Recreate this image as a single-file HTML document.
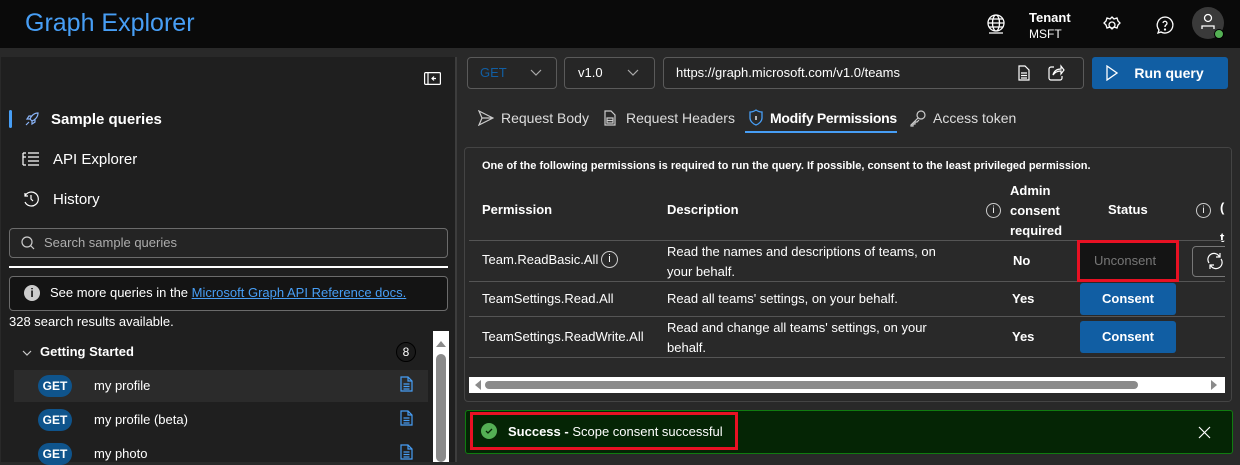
<!DOCTYPE html>
<html><head><meta charset="utf-8"><style>
*{box-sizing:border-box;margin:0;padding:0}
body{width:1240px;height:462px;overflow:hidden;background:#292929;font-family:"Segoe UI","Liberation Sans",sans-serif;color:#fff;position:relative;font-size:14px}
.a{position:absolute}
.hdr{left:0;top:0;width:1240px;height:48px;background:#0a0a0a}
.side{left:1px;top:57px;width:454px;height:405px;background:#1f1f1f}
svg{display:block}
.get{background:#0f548c;border-radius:12px;width:34px;height:22px;font-size:12px;font-weight:bold;text-align:center;line-height:22px}
.btn{background:#115ea3;border-radius:3px;text-align:center;font-weight:bold;font-size:13px}
</style></head><body>
<div class="a hdr"></div>
<div class="a" style="left:25px;top:9px;font-size:25px;color:#479ef5">Graph Explorer</div>
<svg class="a" style="left:985px;top:13px" width="22" height="22" viewBox="0 0 22 22" fill="none" stroke="#fff" stroke-width="1.3"><circle cx="11" cy="10" r="8"/><ellipse cx="11" cy="10" rx="3.5" ry="8"/><path d="M3 10h16M4.5 6h13M4.5 14h13M4 20h14"/></svg>
<div class="a" style="left:1029px;top:10px;font-size:13px;font-weight:bold">Tenant</div>
<div class="a" style="left:1029px;top:27px;font-size:12px">MSFT</div>
<svg class="a" style="left:1102px;top:15px" width="20" height="20" viewBox="0 0 20 20" fill="none" stroke="#fff" stroke-width="1.3"><circle cx="10" cy="10" r="3"/><path d="M10 2l2 2 3-1 1 3 2 2-2 2-1 3-3-1-2 2-2-2-3 1-1-3-2-2 2-2 1-3 3 1z"/></svg>
<svg class="a" style="left:1155px;top:15px" width="20" height="20" viewBox="0 0 20 20" fill="none" stroke="#fff" stroke-width="1.3"><path d="M10 2a8 8 0 1 1-4 15l-3 1 1-3A8 8 0 0 1 10 2z"/><path d="M8 8a2 2 0 1 1 3 2c-1 .5-1 1-1 2"/><circle cx="10" cy="14.5" r=".5" fill="#fff"/></svg>
<div class="a" style="left:1192px;top:7px;width:32px;height:32px;border-radius:16px;background:#3a3a3a"></div>
<svg class="a" style="left:1199px;top:13px" width="18" height="18" viewBox="0 0 18 18" fill="none" stroke="#fff" stroke-width="1.3"><circle cx="9" cy="5" r="3.5"/><path d="M3 16v-3h12v3"/></svg>
<div class="a" style="left:1214px;top:29px;width:10px;height:10px;border-radius:5px;background:#54b054;border:1px solid #000"></div>

<div class="a side"></div>
<div class="a" style="left:455px;top:57px;width:2px;height:405px;background:#3d3d3d"></div>
<svg class="a" style="left:424px;top:72px" width="17" height="13" viewBox="0 0 17 13" fill="none" stroke="#fff" stroke-width="1.2"><rect x=".6" y=".6" width="15.8" height="11.8" rx="1"/><path d="M4 1v11M12 6.5H8m2-2-2 2 2 2"/></svg>
<div class="a" style="left:9px;top:110px;width:3px;height:18px;background:#479ef5;border-radius:2px"></div>
<svg class="a" style="left:24px;top:111px" width="16" height="16" viewBox="0 0 16 16" fill="none" stroke="#8ab4f8" stroke-width="1.2"><path d="M14 2c-4 0-7 3-8 6l2 2c3-1 6-4 6-8zM6 8L3 8l2-3h3M8 10v3l3-2V8M2 14l3-3"/></svg>
<div class="a" style="left:51px;top:111px;font-size:15px;font-weight:bold">Sample queries</div>
<svg class="a" style="left:22px;top:152px" width="18" height="14" viewBox="0 0 18 14" fill="none" stroke="#fff" stroke-width="1.2"><path d="M1 1h3M6 1h11M1 5h3v0M6 5h11M6 9h11M1 13h3M6 13h11M1 1v12"/></svg>
<div class="a" style="left:53px;top:151px;font-size:15px">API Explorer</div>
<svg class="a" style="left:23px;top:191px" width="16" height="16" viewBox="0 0 16 16" fill="none" stroke="#fff" stroke-width="1.2"><path d="M2 5a7 7 0 1 1 0 6M2 2v3h3M8 4v4l2 2"/></svg>
<div class="a" style="left:53px;top:191px;font-size:15px">History</div>
<div class="a" style="left:9px;top:228px;width:439px;height:30px;border:1px solid #6b6b6b;border-radius:4px;background:#242424"></div>
<svg class="a" style="left:21px;top:236px" width="14" height="14" viewBox="0 0 14 14" fill="none" stroke="#ccc" stroke-width="1.2"><circle cx="6" cy="6" r="5"/><path d="M9.5 9.5 13 13"/></svg>
<div class="a" style="left:44px;top:235px;font-size:13px;color:#adadad">Search sample queries</div>
<div class="a" style="left:9px;top:266px;width:439px;height:2px;background:#fff"></div>
<div class="a" style="left:9px;top:276px;width:439px;height:35px;border:1px solid #6b6b6b;border-radius:4px;background:#141414"></div>
<div class="a" style="left:24px;top:285px;width:16px;height:16px;border-radius:8px;background:#ccc;color:#141414;font-size:12px;font-weight:bold;text-align:center;line-height:16px">i</div>
<div class="a" style="left:50px;top:285px;font-size:13px">See more queries in the <span style="color:#479ef5;text-decoration:underline">Microsoft Graph API Reference docs.</span></div>
<div class="a" style="left:9px;top:314px;font-size:13px">328 search results available.</div>
<svg class="a" style="left:22px;top:349px" width="10" height="8" viewBox="0 0 10 8" fill="none" stroke="#ccc" stroke-width="1.2"><path d="M1 2l4 4 4-4"/></svg>
<div class="a" style="left:40px;top:344px;font-size:13px;font-weight:bold">Getting Started</div>
<div class="a" style="left:396px;top:342px;width:20px;height:20px;border-radius:10px;border:1px solid #000;background:#1a1a1a;font-size:12px;text-align:center;line-height:18px">8</div>
<div class="a" style="left:14px;top:370px;width:414px;height:32px;background:#2b2b2b"></div>
<div class="a get" style="left:38px;top:375px">GET</div>
<div class="a" style="left:94px;top:378px;font-size:13px">my profile</div>
<div class="a get" style="left:38px;top:409px">GET</div>
<div class="a" style="left:94px;top:412px;font-size:13px">my profile (beta)</div>
<div class="a get" style="left:38px;top:443px">GET</div>
<div class="a" style="left:94px;top:446px;font-size:13px">my photo</div>
<svg class="a" style="left:400px;top:376px" width="13" height="16" viewBox="0 0 13 16" fill="none" stroke="#479ef5" stroke-width="1.2"><path d="M1 1h7l4 4v10H1zM8 1v4h4M3.5 8h6M3.5 10.5h6M3.5 13h6"/></svg>
<svg class="a" style="left:400px;top:410px" width="13" height="16" viewBox="0 0 13 16" fill="none" stroke="#479ef5" stroke-width="1.2"><path d="M1 1h7l4 4v10H1zM8 1v4h4M3.5 8h6M3.5 10.5h6M3.5 13h6"/></svg>
<svg class="a" style="left:400px;top:444px" width="13" height="16" viewBox="0 0 13 16" fill="none" stroke="#479ef5" stroke-width="1.2"><path d="M1 1h7l4 4v10H1zM8 1v4h4M3.5 8h6M3.5 10.5h6M3.5 13h6"/></svg>
<div class="a" style="left:433px;top:331px;width:16px;height:131px;background:#fff"></div>
<div class="a" style="left:436px;top:354px;width:10px;height:108px;background:#8a8a8a;border-radius:5px"></div>
<svg class="a" style="left:436px;top:340px" width="10" height="7"><path d="M0 7L5 1 10 7z" fill="#8a8a8a"/></svg>

<div class="a" style="left:467px;top:57px;width:90px;height:32px;border:1px solid #5a5a5a;border-radius:4px;background:#262626"></div>
<div class="a" style="left:480px;top:65px;font-size:13px;color:#115ea3">GET</div>
<svg class="a" style="left:530px;top:69px" width="12" height="8" fill="none" stroke="#aaa" stroke-width="1.2"><path d="M1 1l5 5 5-5"/></svg>
<div class="a" style="left:564px;top:57px;width:91px;height:32px;border:1px solid #5a5a5a;border-radius:4px;background:#262626"></div>
<div class="a" style="left:578px;top:65px;font-size:13px">v1.0</div>
<svg class="a" style="left:627px;top:69px" width="12" height="8" fill="none" stroke="#aaa" stroke-width="1.2"><path d="M1 1l5 5 5-5"/></svg>
<div class="a" style="left:663px;top:57px;width:421px;height:32px;border:1px solid #5a5a5a;border-radius:4px;background:#262626"></div>
<div class="a" style="left:676px;top:65px;font-size:13px">https://graph.microsoft.com/v1.0/teams</div>
<svg class="a" style="left:1018px;top:65px" width="12" height="16" fill="none" stroke="#fff" stroke-width="1.2"><path d="M1 1h6l4 4v10H1zM3 8h6M3 10.5h6M3 13h6"/></svg>
<svg class="a" style="left:1048px;top:64px" width="17" height="17" fill="none" stroke="#fff" stroke-width="1.2"><path d="M6 3H3a2 2 0 0 0-2 2v9a2 2 0 0 0 2 2h9a2 2 0 0 0 2-2v-2M5 11c1-4 4-6 8-6V2l3 4-3 4V7c-3 0-6 1-8 4z"/></svg>
<div class="a btn" style="left:1092px;top:57px;width:136px;height:32px;line-height:32px;font-size:14px"><span style="margin-left:18px">Run query</span></div>
<svg class="a" style="left:1106px;top:65px" width="12" height="16" fill="none" stroke="#fff" stroke-width="1.3"><path d="M1 1l10 7-10 7z"/></svg>

<svg class="a" style="left:478px;top:110px" width="16" height="16" fill="none" stroke="#ccc" stroke-width="1.2"><path d="M1 1l14 7-14 7 3-7zM4 8h11"/></svg>
<div class="a" style="left:501px;top:110px;font-size:14px;color:#ddd">Request Body</div>
<svg class="a" style="left:604px;top:110px" width="12" height="16" fill="none" stroke="#ccc" stroke-width="1.2"><path d="M1 1h6l4 4v10H1zM3 8h6v5H3zM3 10.5h6"/></svg>
<div class="a" style="left:626px;top:110px;font-size:14px;color:#ddd">Request Headers</div>
<svg class="a" style="left:749px;top:109px" width="14" height="17" fill="none" stroke="#479ef5" stroke-width="1.3"><path d="M7 1c2 1.5 4 2 6 2v6c0 3-3 6-6 7-3-1-6-4-6-7V3c2 0 4-.5 6-2z"/><path d="M7 7v4" stroke="#fff"/></svg>
<div class="a" style="left:770px;top:110px;font-size:14px;font-weight:bold;letter-spacing:-0.3px">Modify Permissions</div>
<div class="a" style="left:745px;top:131px;width:152px;height:2px;background:#479ef5"></div>
<svg class="a" style="left:910px;top:110px" width="16" height="17" fill="none" stroke="#ccc" stroke-width="1.2"><circle cx="11" cy="5" r="4"/><path d="M8 8l-7 7v1h2v-2h2v-2h2l2-2"/></svg>
<div class="a" style="left:933px;top:110px;font-size:14px;color:#ddd">Access token</div>

<div class="a" style="left:464px;top:147px;width:768px;height:255px;border:1px solid #444;border-radius:4px;background:#292929;overflow:hidden">
<div class="a" style="left:727px;top:98px;width:60px;height:31px;border:1px solid #777;border-radius:4px"></div>
<svg class="a" style="left:741px;top:104px" width="18" height="18" fill="none" stroke="#fff" stroke-width="1.2"><path d="M3 11a6 6 0 0 1 10-7l1 1M15 7a6 6 0 0 1-10 7l-1-1M14 1v4h-4M4 17v-4h4"/></svg>
<div class="a" style="left:755px;top:45px;font-size:13px;font-weight:bold;line-height:30px">(<br>t</div>
<div class="a" style="left:760px;top:0;width:8px;height:255px;background:#292929"></div>
</div>
<div class="a" style="left:482px;top:160px;font-size:11px;font-weight:bold">One of the following permissions is required to run the query. If possible, consent to the least privileged permission.</div>
<div class="a" style="left:482px;top:202px;font-size:13px;font-weight:bold">Permission</div>
<div class="a" style="left:667px;top:202px;font-size:13px;font-weight:bold">Description</div>
<div class="a" style="left:986px;top:203px;width:15px;height:15px;border:1px solid #ccc;border-radius:8px;font-size:10px;text-align:center;line-height:13px">i</div>
<div class="a" style="left:1010px;top:181px;font-size:13px;font-weight:bold;line-height:20px">Admin<br>consent<br>required</div>
<div class="a" style="left:1108px;top:202px;font-size:13px;font-weight:bold">Status</div>
<div class="a" style="left:1196px;top:203px;width:15px;height:15px;border:1px solid #ccc;border-radius:8px;font-size:10px;text-align:center;line-height:13px">i</div>
<div class="a" style="left:469px;top:240px;width:756px;height:1px;background:#555"></div>
<div class="a" style="left:469px;top:281px;width:756px;height:1px;background:#555"></div>
<div class="a" style="left:469px;top:316px;width:756px;height:1px;background:#555"></div>
<div class="a" style="left:469px;top:357px;width:756px;height:1px;background:#555"></div>
<div class="a" style="left:482px;top:252px;font-size:13px">Team.ReadBasic.All</div>
<div class="a" style="left:601px;top:251px;width:17px;height:17px;border:1px solid #ccc;border-radius:9px;font-size:11px;text-align:center;line-height:15px">i</div>
<div class="a" style="left:667px;top:242px;font-size:13px;line-height:20px">Read the names and descriptions of teams, on<br>your behalf.</div>
<div class="a" style="left:1013px;top:253px;font-size:13px;font-weight:bold">No</div>
<div class="a" style="left:1077px;top:240px;width:102px;height:42px;border:3px solid #e81123;background:#141414"></div>
<div class="a" style="left:1094px;top:253px;font-size:13px;color:#777">Unconsent</div>
<div class="a" style="left:482px;top:291px;font-size:13px">TeamSettings.Read.All</div>
<div class="a" style="left:667px;top:291px;font-size:13px">Read all teams' settings, on your behalf.</div>
<div class="a" style="left:1012px;top:291px;font-size:13px;font-weight:bold">Yes</div>
<div class="a btn" style="left:1080px;top:283px;width:96px;height:32px;line-height:32px">Consent</div>
<div class="a" style="left:482px;top:329px;font-size:13px">TeamSettings.ReadWrite.All</div>
<div class="a" style="left:667px;top:318px;font-size:13px;line-height:20px">Read and change all teams' settings, on your<br>behalf.</div>
<div class="a" style="left:1012px;top:329px;font-size:13px;font-weight:bold">Yes</div>
<div class="a btn" style="left:1080px;top:321px;width:96px;height:32px;line-height:32px">Consent</div>
<div class="a" style="left:469px;top:377px;width:756px;height:16px;background:#fff"></div>
<div class="a" style="left:485px;top:381px;width:653px;height:8px;background:#8a8a8a;border-radius:4px"></div>
<svg class="a" style="left:475px;top:380px" width="6" height="10"><path d="M6 0v10L0 5z" fill="#8a8a8a"/></svg>
<svg class="a" style="left:1211px;top:380px" width="6" height="10"><path d="M0 0v10l6-5z" fill="#8a8a8a"/></svg>

<div class="a" style="left:465px;top:410px;width:768px;height:44px;border:1px solid #107c10;border-radius:3px;background:#052505"></div>
<div class="a" style="left:470px;top:412px;width:268px;height:38px;border:3px solid #e81123"></div>
<div class="a" style="left:481px;top:423px;width:16px;height:16px;border-radius:8px;background:#54b054"></div>
<svg class="a" style="left:485px;top:428px" width="8" height="6" fill="none" stroke="#052505" stroke-width="1.3"><path d="M1 3l2 2 4-4"/></svg>
<div class="a" style="left:508px;top:424px;font-size:13px"><b>Success -</b> Scope consent successful</div>
<svg class="a" style="left:1198px;top:426px" width="13" height="13" fill="none" stroke="#fff" stroke-width="1.2"><path d="M1 1l11 11M12 1 1 12"/></svg>
</body></html>
